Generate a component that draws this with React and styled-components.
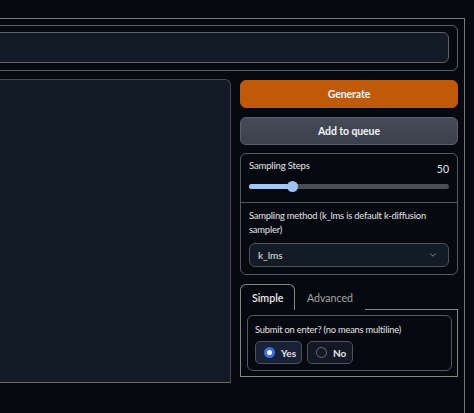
import React from "react";
import styled, { createGlobalStyle } from "styled-components";

const GlobalStyle = createGlobalStyle`
  html, body {
    margin: 0;
    padding: 0;
    background: #070911;
    font-family: "Lato", "Noto Sans", sans-serif;
    overflow: hidden;
  }
`;

const Page = styled.div`
  width: 474px;
  height: 413px;
  overflow: hidden;
  background: #070911;
  padding-top: 18px;
  box-sizing: border-box;
`;

const Frame = styled.div`
  margin-left: -30px;
  width: 495px;
  box-sizing: border-box;
  border: 1px solid #7a7873;
  border-bottom: none;
  padding: 6px 6px 0 7px;
  display: flex;
  flex-direction: column;
  gap: 8px;
  height: 420px;
`;

const PromptBox = styled.div`
  border: 1px solid #5e5e61;
  border-radius: 6px;
  padding: 6px 8px 7px 6px;
`;

const TextArea = styled.div`
  height: 29px;
  border: 1px solid #5f6166;
  border-radius: 6px;
  background: #121a26;
`;

const Row = styled.div`
  display: flex;
  gap: 9px;
  align-items: flex-start;
`;

const ImagePanel = styled.div`
  flex: 1;
  height: 304px;
  box-sizing: border-box;
  background: #121a25;
  border: 1px solid #45484f;
  border-bottom-color: #6a6b6e;
  border-radius: 0 6px 0 0;
`;

const Side = styled.div`
  width: 218px;
  flex-shrink: 0;
  display: flex;
  flex-direction: column;
  margin-top: 1px;
`;

const Button = styled.button`
  height: 28px;
  width: 100%;
  border-radius: 6px;
  font-family: inherit;
  font-size: 10.5px;
  font-weight: 700;
  letter-spacing: -0.1px;
  color: #f3f3f3;
  cursor: pointer;
  background: ${({ $primary }) =>
    $primary ? "#c05a09" : "linear-gradient(#454b57, #3a404c)"};
  border: 1px solid ${({ $primary }) => ($primary ? "#c05a09" : "#5a606b")};
  margin-bottom: ${({ $gap }) => $gap}px;
`;

const Block = styled.div`
  border: 1px solid #58585a;
  border-radius: 6px;
  margin-bottom: 9px;
`;

const Section = styled.div`
  padding: ${({ $pad }) => $pad};
  border-top: ${({ $divider }) => ($divider ? "1px solid #58585a" : "none")};
`;

const LabelRow = styled.div`
  display: flex;
  justify-content: space-between;
  align-items: flex-start;
`;

const Label = styled.div`
  font-size: ${({ $size }) => $size || 9.6}px;
  letter-spacing: -0.2px;
  line-height: 14px;
  color: #e4e4e4;
`;

const Value = styled.div`
  font-size: 10.5px;
  line-height: 14px;
  color: #e4e4e4;
  padding-top: 3px;
`;

const Track = styled.div`
  position: relative;
  height: 5px;
  border-radius: 3px;
  background: #4b4f55;
  margin-top: 8px;
`;

const Fill = styled.div`
  height: 100%;
  border-radius: 3px;
  background: #a3c8f5;
`;

const Thumb = styled.div`
  position: absolute;
  top: -3px;
  width: 11px;
  height: 11px;
  margin-left: -5px;
  border-radius: 50%;
  background: #9cc3f3;
`;

const Select = styled.div`
  margin-top: 6px;
  height: 24px;
  box-sizing: border-box;
  border: 1px solid #4f5156;
  border-radius: 6px;
  background: #131b27;
  display: flex;
  align-items: center;
  justify-content: space-between;
  padding: 0 10px 0 8px;
  font-size: 10px;
  color: #e4e4e4;
`;

const Tabs = styled.div`
  display: flex;
  align-items: flex-end;
`;

const Tab = styled.div`
  height: 26px;
  box-sizing: border-box;
  padding: 0 11px;
  display: flex;
  align-items: center;
  font-size: 10.6px;
  font-weight: ${({ $active }) => ($active ? 600 : 400)};
  color: ${({ $active }) => ($active ? "#e8e8e8" : "#a6a6a6")};
  border: 1px solid ${({ $active }) => ($active ? "#8a8780" : "transparent")};
  border-bottom: none;
  border-radius: 6px 6px 0 0;
  margin-bottom: -1px;
  background: #070911;
  position: relative;
  width: ${({ $w }) => ($w ? `${$w}px` : "auto")};
`;

const TabPanel = styled.div`
  border: 1px solid #8a8780;
  padding: 5px 5px 5px 6px;
`;

const Form = styled.div`
  border: 1px solid #58585a;
  border-radius: 6px;
  padding: 7px 7px 6px;
`;

const Radios = styled.div`
  display: flex;
  gap: 5px;
  margin-top: 4px;
`;

const Radio = styled.div`
  height: 23px;
  box-sizing: border-box;
  width: ${({ $w }) => $w}px;
  display: flex;
  align-items: center;
  gap: 6px;
  padding-left: 8px;
  border: 1px solid #4f525a;
  border-radius: 5px;
  background: ${({ $on }) => ($on ? "#182135" : "#121824")};
  font-size: 10px;
  font-weight: 700;
  color: #e4e4e4;
`;

const Dot = styled.span`
  width: 11px;
  height: 11px;
  box-sizing: border-box;
  border-radius: 50%;
  border: ${({ $on }) => ($on ? "3px solid #3a6ee8" : "1px solid #6b6f78")};
  background: ${({ $on }) => ($on ? "#ffffff" : "transparent")};
`;

const Chevron = () => (
  <svg width="10" height="10" viewBox="0 0 24 24" fill="none" stroke="#8f8f8f" strokeWidth="2.2" strokeLinecap="round" strokeLinejoin="round">
    <path d="M6 9l6 6 6-6" />
  </svg>
);

export default function App() {
  const steps = 50;
  const pct = 21.5;
  return (
    <Page>
      <GlobalStyle />
      <Frame>
        <PromptBox>
          <TextArea />
        </PromptBox>
        <Row>
          <ImagePanel />
          <Side>
            <Button $primary $gap={9}>Generate</Button>
            <Button $gap={8}>Add to queue</Button>
            <Block>
              <Section $pad="5px 8px 13px">
                <LabelRow>
                  <Label>Sampling Steps</Label>
                  <Value>{steps}</Value>
                </LabelRow>
                <Track>
                  <Fill style={{ width: `${pct}%` }} />
                  <Thumb style={{ left: `${pct}%` }} />
                </Track>
              </Section>
              <Section $divider $pad="6px 8px 7px">
                <Label $size={9.4}>Sampling method (k_lms is default k-diffusion sampler)</Label>
                <Select>
                  k_lms
                  <Chevron />
                </Select>
              </Section>
            </Block>
            <Tabs>
              <Tab $active $w={55}>Simple</Tab>
              <Tab>Advanced</Tab>
            </Tabs>
            <TabPanel>
              <Form>
                <Label $size={9.3}>Submit on enter? (no means multiline)</Label>
                <Radios>
                  <Radio $on $w={47}>
                    <Dot $on />
                    Yes
                  </Radio>
                  <Radio $w={46}>
                    <Dot />
                    No
                  </Radio>
                </Radios>
              </Form>
            </TabPanel>
          </Side>
        </Row>
      </Frame>
    </Page>
  );
}
